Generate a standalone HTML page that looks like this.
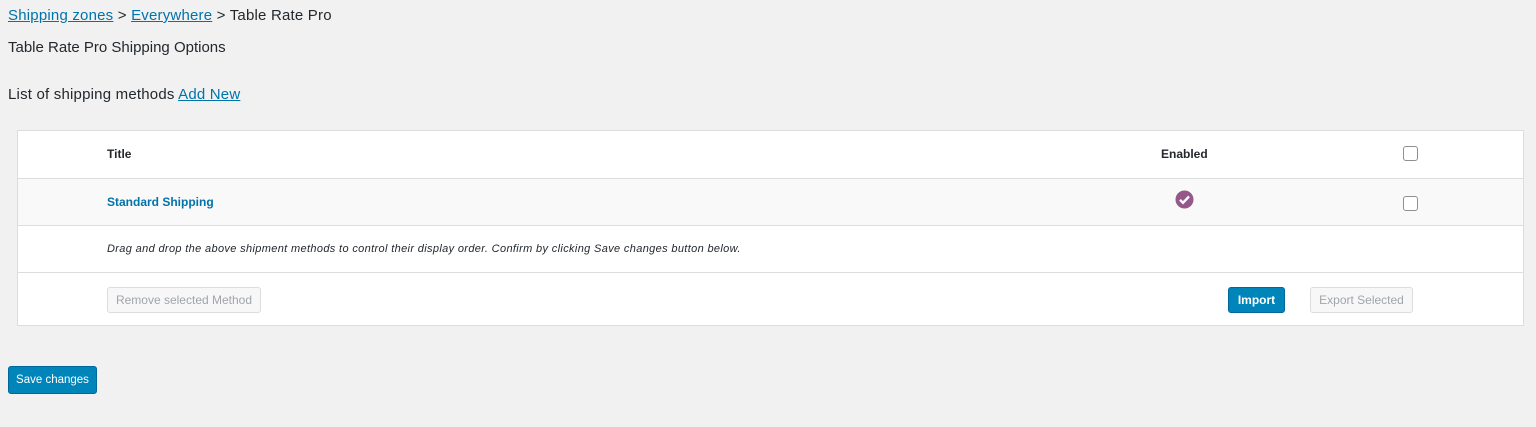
<!DOCTYPE html>
<html><head><style>
body{margin:0;width:1536px;height:427px;background:#f1f1f1;font-family:"Liberation Sans",sans-serif;color:#23282d;position:relative;overflow:hidden}
.a{position:absolute;white-space:nowrap}
a{color:#0073aa;text-decoration:underline}
.tbl{position:absolute;left:17px;top:130px;width:1505px;height:194px;background:#fff;border:1px solid #ddd}
.row{position:absolute;left:0;width:1505px;border-top:1px solid #ddd}
.cb{position:absolute;width:13px;height:13px;border:1px solid #8c8f94;border-radius:3px;background:#fff}
.btn{position:absolute;height:24px;border:1px solid #ddd;background:#f7f7f7;color:#a0a5aa;font-size:12px;line-height:24px;text-align:center;border-radius:3px}
.pri{background:#0085ba;border-color:#006799;color:#fff;font-weight:600}
</style></head><body>
<div class="a" style="left:8px;top:7px;font-size:15px;letter-spacing:0.2px"><a>Shipping zones</a> &gt; <a>Everywhere</a> &gt; Table Rate Pro</div>
<div class="a" style="left:8px;top:39px;font-size:15px">Table Rate Pro Shipping Options</div>
<div class="a" style="left:8px;top:86px;font-size:15px;letter-spacing:0.2px">List of shipping methods <a>Add New</a></div>
<div class="tbl">
 <div class="a" style="left:89px;top:16px;font-size:12px;font-weight:600">Title</div>
 <div class="a" style="left:1143px;top:16px;font-size:12px;font-weight:600">Enabled</div>
 <div class="cb" style="left:1385px;top:15px"></div>
 <div class="row" style="top:47px;height:46px;background:#f9f9f9">
  <div class="a" style="left:89px;top:16px;font-size:12px;font-weight:600;color:#0073aa">Standard Shipping</div>
  <svg class="a" style="left:1157px;top:11px" width="19" height="19" viewBox="0 0 19 19"><circle cx="9.5" cy="9.5" r="9" fill="#96588a"/><path d="M5 9.8l3 3 6-6.3" stroke="#fff" stroke-width="2.4" fill="none"/></svg>
  <div class="cb" style="left:1385px;top:17px"></div>
 </div>
 <div class="row" style="top:94px;height:46px">
  <div class="a" style="left:89px;top:17px;font-size:11px;font-style:italic;letter-spacing:0.35px">Drag and drop the above shipment methods to control their display order. Confirm by clicking Save changes button below.</div>
 </div>
 <div class="row" style="top:141px;height:53px">
  <div class="btn" style="left:89px;top:14px;width:152px">Remove selected Method</div>
  <div class="btn pri" style="left:1210px;top:14px;width:55px">Import</div>
  <div class="btn" style="left:1292px;top:14px;width:101px">Export Selected</div>
 </div>
</div>
<div class="btn pri" style="left:8px;top:366px;width:87px;height:26px;line-height:26px;font-weight:400;font-size:11.5px">Save changes</div>
</body></html>
